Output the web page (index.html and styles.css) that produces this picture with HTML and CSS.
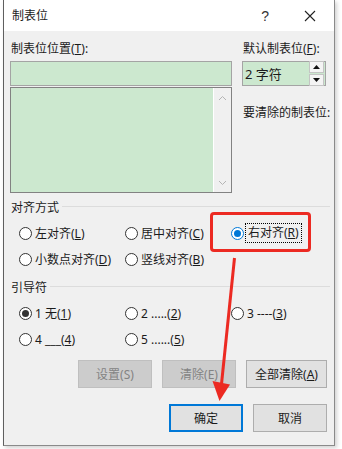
FILE: index.html
```html
<!DOCTYPE html>
<html lang="zh-CN">
<head>
    <meta charset="UTF-8">
    <title>制表位</title>
    <link rel="stylesheet" href="styles.css">
</head>
<body>
    <div class="dialog">
        <div class="titlebar">
            <span class="title">制表位</span>
            <span class="help">?</span>
            <svg class="close" width="12" height="12" viewBox="0 0 12 12">
                <path d="M1 1 L11 11 M11 1 L1 11" stroke="#222" stroke-width="1.1" fill="none"/>
            </svg>
        </div>

        <div class="content">
            <div class="top">
                <div class="col-left">
                    <div class="label">制表位位置(<u>T</u>):</div>
                    <div class="field"></div>
                    <div class="list">
                        <div class="list-body"></div>
                        <div class="scroll">
                            <svg width="9" height="6" viewBox="0 0 9 6"><path d="M1 5 L4.5 1.5 L8 5" stroke="#b4b4b4" fill="none"/></svg>
                            <svg width="9" height="6" viewBox="0 0 9 6"><path d="M1 1 L4.5 4.5 L8 1" stroke="#b4b4b4" fill="none"/></svg>
                        </div>
                    </div>
                </div>
                <div class="col-right">
                    <div class="label">默认制表位(<u>F</u>):</div>
                    <div class="spin">
                        <span class="spin-text">2 字符</span>
                        <div class="spin-btns">
                            <span class="spin-btn"><svg width="7" height="4" viewBox="0 0 7 4"><path d="M0 4 L3.5 0 L7 4 Z" fill="#111"/></svg></span>
                            <span class="spin-btn"><svg width="7" height="4" viewBox="0 0 7 4"><path d="M0 0 L3.5 4 L7 0 Z" fill="#111"/></svg></span>
                        </div>
                    </div>
                    <div class="label clear-label">要清除的制表位:</div>
                </div>
            </div>

            <div class="group-head first">
                <span>对齐方式</span>
                <span class="rule"></span>
            </div>
            <div class="radio-row">
                <label class="radio"><span class="dot"></span><span>左对齐(<u>L</u>)</span></label>
                <label class="radio"><span class="dot"></span><span>居中对齐(<u>C</u>)</span></label>
                <label class="radio"><span class="dot on-blue"></span><span class="focus">右对齐(<u>R</u>)</span></label>
            </div>
            <div class="radio-row">
                <label class="radio"><span class="dot"></span><span>小数点对齐(<u>D</u>)</span></label>
                <label class="radio"><span class="dot"></span><span>竖线对齐(<u>B</u>)</span></label>
            </div>

            <div class="group-head">
                <span>引导符</span>
                <span class="rule"></span>
            </div>
            <div class="radio-row">
                <label class="radio"><span class="dot on-dark"></span><span>1 无(<u>1</u>)</span></label>
                <label class="radio"><span class="dot"></span><span>2 .....(<u>2</u>)</span></label>
                <label class="radio"><span class="dot"></span><span>3 ----(<u>3</u>)</span></label>
            </div>
            <div class="radio-row">
                <label class="radio"><span class="dot"></span><span>4 ___(<u>4</u>)</span></label>
                <label class="radio"><span class="dot"></span><span>5 ......(<u>5</u>)</span></label>
            </div>

            <div class="btn-row">
                <button class="btn" disabled>设置(S)</button>
                <button class="btn" disabled>清除(E)</button>
                <button class="btn wide">全部清除(<u>A</u>)</button>
            </div>
            <div class="btn-row second">
                <button class="btn default">确定</button>
                <button class="btn">取消</button>
            </div>
        </div>
    </div>

    <div class="mark-box"></div>
    <svg class="mark-arrow" width="342" height="449" viewBox="0 0 342 449">
        <path d="M234.5 258 L221.5 384" stroke="#ec2a22" stroke-width="3" fill="none"/>
        <path d="M212.5 381 L230 384.5 L219.5 401 Z" fill="#ec2a22"/>
    </svg>
</body>
</html>
```

FILE: styles.css
```css
body {
    margin: 0;
    background: #fff;
    font-family: "Noto Sans", "Noto Sans CJK SC", sans-serif;
    font-size: 12px;
    color: #1b1b1b;
    position: relative;
    width: 342px;
    height: 449px;
    overflow: hidden;
}

u {
    text-decoration: underline;
    text-underline-offset: 1px;
}

.dialog {
    margin-left: 3px;
    width: 332px;
    height: 446px;
    box-sizing: border-box;
    border: 1px solid #8a8a8a;
    border-top: none;
    border-left-color: #5f5f5f;
    background: #f0f0f0;
    box-shadow: 2px 2px 4px rgba(0,0,0,0.18);
}

.titlebar {
    height: 31px;
    background: #fff;
    display: flex;
    align-items: center;
    padding-left: 8px;
}

.title {
    flex: 1;
    line-height: 17px;
}

.help {
    font-family: "Liberation Sans", sans-serif;
    font-size: 14px;
    color: #333;
    margin-right: 35px;
}

.close {
    margin-right: 18px;
}

.content {
    padding: 0 7px 0 6px;
}

.top {
    display: flex;
    gap: 10px;
}

.col-left {
    width: 222px;
}

.col-right {
    width: 85px;
}

.label {
    margin-top: 9px;
    line-height: 17px;
    padding-left: 1px;
    white-space: nowrap;
}

.field {
    margin-top: 4px;
    height: 25px;
    box-sizing: border-box;
    border: 1px solid #a4a4a4;
    background: #cce8cf;
}

.list {
    margin-top: 1px;
    height: 106px;
    box-sizing: border-box;
    border: 1px solid #828282;
    display: flex;
}

.list-body {
    flex: 1;
    background: #cce8cf;
}

.scroll {
    width: 17px;
    background: #f0f0f0;
    border-left: 1px solid #fff;
    display: flex;
    flex-direction: column;
    align-items: center;
    justify-content: space-between;
    padding: 7px 0 6px;
}

.spin {
    margin-top: 4px;
    width: 84px;
    height: 25px;
    box-sizing: border-box;
    border: 1px solid #a4a4a4;
    background: #cce8cf;
    display: flex;
    align-items: center;
}

.spin-text {
    flex: 1;
    padding-left: 2px;
    font-size: 13px;
}

.spin-btns {
    display: flex;
    flex-direction: column;
    gap: 1px;
    margin-right: 1px;
}

.spin-btn {
    width: 13px;
    height: 10px;
    background: #f4f4f4;
    border: 1px solid #c4c4c4;
    display: flex;
    align-items: center;
    justify-content: center;
}

.clear-label {
    margin-top: 18px;
}

.group-head {
    display: flex;
    align-items: center;
    margin-top: 7px;
    line-height: 17px;
    padding-left: 1px;
}

.group-head.first {
    margin-top: 6px;
}

.rule {
    flex: 1;
    height: 1px;
    background: #dcdcdc;
    margin-left: 3px;
    margin-right: -3px;
    position: relative;
    top: -1px;
}

.radio-row {
    display: flex;
    height: 26px;
    padding-left: 9px;
}

.radio {
    width: 106px;
    flex-shrink: 0;
    display: flex;
    align-items: center;
    gap: 3px;
    white-space: nowrap;
}

.group-head + .radio-row {
    margin-top: 4px;
}

.dot {
    width: 13px;
    height: 13px;
    box-sizing: border-box;
    border: 1px solid #333;
    border-radius: 50%;
    background: #fff;
    flex-shrink: 0;
    display: flex;
    align-items: center;
    justify-content: center;
}

.dot.on-blue {
    border-color: #0078d7;
}

.dot.on-blue::after,
.dot.on-dark::after {
    content: "";
    width: 7px;
    height: 7px;
    border-radius: 50%;
    background: #0078d7;
}

.dot.on-dark::after {
    background: #333;
}

.focus {
    outline: 1px dotted #000;
    outline-offset: 1px;
    padding: 0 1px;
    line-height: 16px;
}

.btn-row {
    display: flex;
    justify-content: flex-end;
    gap: 10px;
    margin-top: 8px;
}

.btn-row.second {
    margin-top: 16px;
}

.btn {
    width: 74px;
    height: 28px;
    box-sizing: border-box;
    background: #e1e1e1;
    border: 1px solid #adadad;
    font-family: "Noto Sans", "Noto Sans CJK SC", sans-serif;
    font-size: 12px;
    color: #1b1b1b;
    padding: 0;
}

.btn.wide {
    width: 81px;
}

.btn:disabled {
    background: #cccccc;
    border-color: #bfbfbf;
    color: #838383;
}

.btn.default {
    border: 2px solid #0078d7;
}

.mark-box {
    position: absolute;
    left: 210px;
    top: 212px;
    width: 101px;
    height: 40px;
    box-sizing: border-box;
    border: 3px solid #ec2a22;
    border-radius: 4px;
}

.mark-arrow {
    position: absolute;
    left: 0;
    top: 0;
    pointer-events: none;
}
```
